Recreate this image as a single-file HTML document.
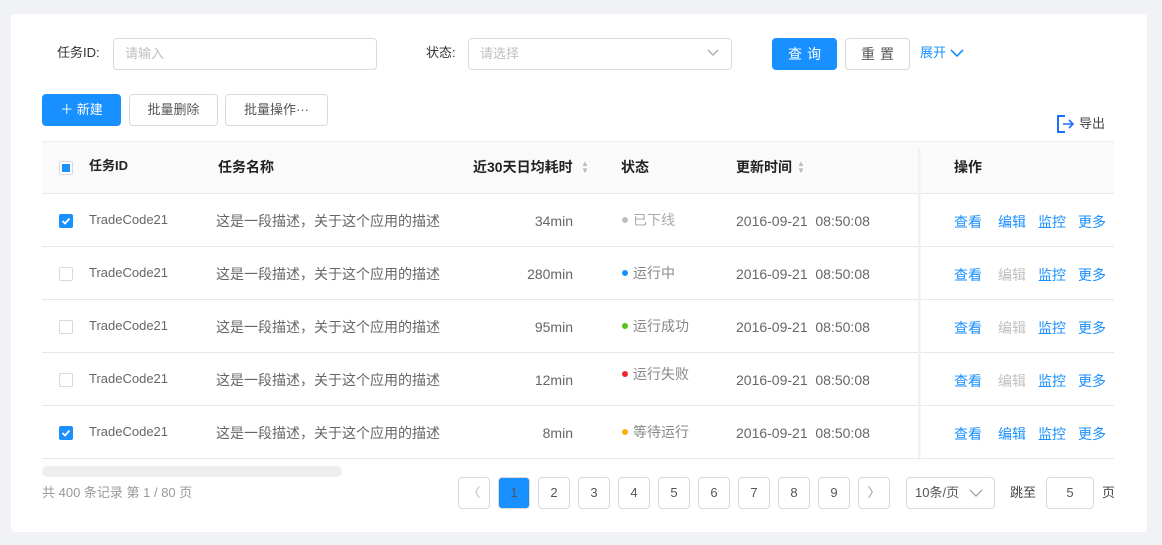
<!DOCTYPE html>
<html><head><meta charset="utf-8"><style>
*{box-sizing:border-box;margin:0;padding:0}
body{width:1162px;height:545px;background:#f0f2f5;font-family:"Liberation Sans","Noto Sans CJK SC",sans-serif;font-size:14px;color:#333;position:relative;overflow:hidden}
.a{position:absolute;line-height:20px;height:20px;white-space:nowrap}
.card{left:11px;top:14px;width:1136px;height:518px;background:#fff;border-radius:4px}
.inp{border:1px solid #d9d9d9;border-radius:4px;height:32px;line-height:30px;color:#bfbfbf;padding:0 11px;font-size:13px}
.btn{border:1px solid #d9d9d9;border-radius:4px;height:32px;text-align:center;line-height:30px;color:#555;background:#fff}
.pri{background:#1890ff;border-color:#1890ff;color:#fff}
.row{left:42px;width:1072px;height:53px;border-bottom:1px solid #e8e8e8}
.cb{width:14px;height:14px;border:1px solid #d9d9d9;border-radius:2px;background:#fff;line-height:12px}
.cb.on{background:#1890ff;border-color:#1890ff}
.t{color:#666}
.h{font-weight:bold;color:#222}
.lnk{color:#1890ff}
.dis{color:#bfbfbf}
.pg{width:32px;height:32px;top:477px;border:1px solid #d9d9d9;border-radius:4px;text-align:center;line-height:30px;color:#555;font-size:13px}
.dot{display:inline-block;width:6px;height:6px;border-radius:50%;margin-right:5px;vertical-align:2px}
</style></head><body>
<div class="a card"></div>
<div class="a" style="left:57px;top:43px;font-size:13px">任务ID:</div>
<div class="a inp" style="left:113px;top:38px;width:264px">请输入</div>
<div class="a" style="left:426px;top:43px;font-size:13px">状态:</div>
<div class="a inp" style="left:468px;top:38px;width:264px">请选择</div>
<svg class="a" style="left:707px;top:48px" width="12" height="10"><path d="M1 2l5 5 5-5" stroke="#aaa" fill="none" stroke-width="1.3"/></svg>
<div class="a btn pri" style="left:772px;top:38px;width:65px;letter-spacing:5px;padding-left:5px">查询</div>
<div class="a btn" style="left:845px;top:38px;width:65px;letter-spacing:5px;padding-left:5px">重置</div>
<div class="a lnk" style="left:920px;top:43px;font-size:13px">展开</div>
<svg class="a" style="left:950px;top:48px" width="14" height="10"><path d="M1 2l6 6 6-6" stroke="#1890ff" fill="none" stroke-width="1.6"/></svg>

<div class="a btn pri" style="left:42px;top:94px;width:79px;font-size:13px">＋ 新建</div>
<div class="a btn" style="left:129px;top:94px;width:89px;font-size:13px">批量删除</div>
<div class="a btn" style="left:225px;top:94px;width:103px;font-size:13px">批量操作···</div>
<svg class="a" style="left:1055px;top:114px" width="22" height="20"><path d="M10 2H3v16h7" stroke="#1e6fff" fill="none" stroke-width="2"/><path d="M8 10h10M14 6l4 4-4 4" stroke="#1e6fff" fill="none" stroke-width="1.6"/></svg>
<div class="a" style="left:1079px;top:114px;color:#444;font-size:13px">导出</div>

<div class="a row" style="top:141px;background:#fafafa;border-top:1px solid #eee"></div>
<div class="a cb" style="left:59px;top:161px"><div style="width:8px;height:8px;background:#1890ff;margin:2px"></div></div>
<div class="a h" style="left:89px;top:156px;font-size:13px">任务ID</div>
<div class="a h" style="left:218px;top:157px">任务名称</div>
<div class="a h" style="left:473px;top:157px">近30天日均耗时</div>
<div class="a" style="left:581px;top:160px;color:#bbb;font-size:8px;line-height:7px;height:14px">▲<br>▼</div>
<div class="a h" style="left:621px;top:157px">状态</div>
<div class="a h" style="left:736px;top:157px">更新时间</div>
<div class="a" style="left:797px;top:160px;color:#bbb;font-size:8px;line-height:7px;height:14px">▲<br>▼</div>
<div class="a h" style="left:954px;top:157px">操作</div>

<div class="a row" style="top:194px"></div>
<div class="a row" style="top:247px"></div>
<div class="a row" style="top:300px"></div>
<div class="a row" style="top:353px"></div>
<div class="a row" style="top:406px"></div>
<div class="a" style="left:918px;top:148px;width:3px;height:312px;background:linear-gradient(90deg,#eee,#f7f7f7)"></div>

<div class="a cb on" style="left:59px;top:214px;height:14px"><svg width="12" height="12"><path d="M2.5 6l2.5 2.5 4.5-5" stroke="#fff" stroke-width="1.8" fill="none"/></svg></div>
<div class="a cb" style="left:59px;top:267px;height:14px"></div>
<div class="a cb" style="left:59px;top:320px;height:14px"></div>
<div class="a cb" style="left:59px;top:373px;height:14px"></div>
<div class="a cb on" style="left:59px;top:426px;height:14px"><svg width="12" height="12"><path d="M2.5 6l2.5 2.5 4.5-5" stroke="#fff" stroke-width="1.8" fill="none"/></svg></div>

<div class="a t" style="left:89px;top:210px;font-size:13px">TradeCode21</div>
<div class="a t" style="left:89px;top:263px;font-size:13px">TradeCode21</div>
<div class="a t" style="left:89px;top:316px;font-size:13px">TradeCode21</div>
<div class="a t" style="left:89px;top:369px;font-size:13px">TradeCode21</div>
<div class="a t" style="left:89px;top:422px;font-size:13px">TradeCode21</div>

<div class="a t" style="left:216px;top:211px">这是一段描述，关于这个应用的描述</div>
<div class="a t" style="left:216px;top:264px">这是一段描述，关于这个应用的描述</div>
<div class="a t" style="left:216px;top:317px">这是一段描述，关于这个应用的描述</div>
<div class="a t" style="left:216px;top:370px">这是一段描述，关于这个应用的描述</div>
<div class="a t" style="left:216px;top:423px">这是一段描述，关于这个应用的描述</div>

<div class="a t" style="right:589px;top:211px">34min</div>
<div class="a t" style="right:589px;top:264px">280min</div>
<div class="a t" style="right:589px;top:317px">95min</div>
<div class="a t" style="right:589px;top:370px">12min</div>
<div class="a t" style="right:589px;top:423px">8min</div>

<div class="a t" style="left:622px;top:210px;color:#aaa"><span class="dot" style="background:#bfbfbf"></span>已下线</div>
<div class="a t" style="left:622px;top:263px;color:#888"><span class="dot" style="background:#1890ff"></span>运行中</div>
<div class="a t" style="left:622px;top:316px;color:#888"><span class="dot" style="background:#52c41a"></span>运行成功</div>
<div class="a t" style="left:622px;top:364px;color:#888"><span class="dot" style="background:#f5222d"></span>运行失败</div>
<div class="a t" style="left:622px;top:422px;color:#888"><span class="dot" style="background:#faad14"></span>等待运行</div>

<div class="a t" style="left:736px;top:211px">2016-09-21&nbsp; 08:50:08</div>
<div class="a t" style="left:736px;top:264px">2016-09-21&nbsp; 08:50:08</div>
<div class="a t" style="left:736px;top:317px">2016-09-21&nbsp; 08:50:08</div>
<div class="a t" style="left:736px;top:370px">2016-09-21&nbsp; 08:50:08</div>
<div class="a t" style="left:736px;top:423px">2016-09-21&nbsp; 08:50:08</div>

<div class="a lnk" style="left:954px;top:212px">查看</div><div class="a lnk" style="left:998px;top:212px">编辑</div><div class="a lnk" style="left:1038px;top:212px">监控</div><div class="a lnk" style="left:1078px;top:212px">更多</div>
<div class="a lnk" style="left:954px;top:265px">查看</div><div class="a dis" style="left:998px;top:265px">编辑</div><div class="a lnk" style="left:1038px;top:265px">监控</div><div class="a lnk" style="left:1078px;top:265px">更多</div>
<div class="a lnk" style="left:954px;top:318px">查看</div><div class="a dis" style="left:998px;top:318px">编辑</div><div class="a lnk" style="left:1038px;top:318px">监控</div><div class="a lnk" style="left:1078px;top:318px">更多</div>
<div class="a lnk" style="left:954px;top:371px">查看</div><div class="a dis" style="left:998px;top:371px">编辑</div><div class="a lnk" style="left:1038px;top:371px">监控</div><div class="a lnk" style="left:1078px;top:371px">更多</div>
<div class="a lnk" style="left:954px;top:424px">查看</div><div class="a lnk" style="left:998px;top:424px">编辑</div><div class="a lnk" style="left:1038px;top:424px">监控</div><div class="a lnk" style="left:1078px;top:424px">更多</div>

<div class="a" style="left:42px;top:466px;width:300px;height:11px;background:#eee;border-radius:6px"></div>
<div class="a" style="left:42px;top:483px;color:#999;font-size:13px">共 400 条记录 第 1 / 80 页</div>

<div class="a pg" style="left:458px;color:#bbb">〈</div>
<div class="a pg pri" style="left:498px">1</div>
<div class="a pg" style="left:538px">2</div>
<div class="a pg" style="left:578px">3</div>
<div class="a pg" style="left:618px">4</div>
<div class="a pg" style="left:658px">5</div>
<div class="a pg" style="left:698px">6</div>
<div class="a pg" style="left:738px">7</div>
<div class="a pg" style="left:778px">8</div>
<div class="a pg" style="left:818px">9</div>
<div class="a pg" style="left:858px;color:#999">〉</div>
<div class="a pg" style="left:906px;width:89px;text-align:left;padding-left:8px">10条/页</div>
<svg class="a" style="left:969px;top:488px" width="14" height="10"><path d="M1 2l6 6 6-6" stroke="#999" fill="none" stroke-width="1.2"/></svg>
<div class="a" style="left:1010px;top:483px;color:#444;font-size:13px">跳至</div>
<div class="a pg" style="left:1046px;width:48px">5</div>
<div class="a" style="left:1102px;top:483px;color:#444;font-size:13px">页</div>
</body></html>
